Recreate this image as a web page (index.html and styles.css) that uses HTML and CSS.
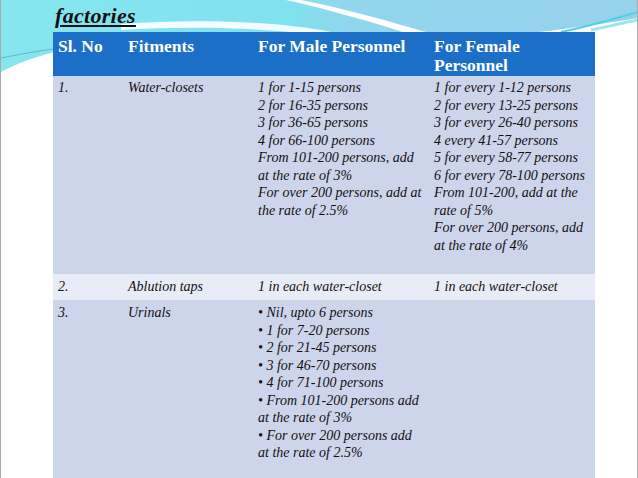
FILE: index.html
```html
<!DOCTYPE html>
<html>
<head>
<meta charset="utf-8">
<link rel="stylesheet" href="styles.css">
</head>
<body>
<div class="slide">
  <svg class="bg" width="638" height="478" viewBox="0 0 638 478" xmlns="http://www.w3.org/2000/svg">
    <defs>
      <linearGradient id="sky" x1="0" y1="0" x2="1" y2="0">
        <stop offset="0" stop-color="#86e6f0"/>
        <stop offset="0.45" stop-color="#80e2ee"/>
        <stop offset="0.55" stop-color="#92d6ec"/>
        <stop offset="1" stop-color="#96d2ec"/>
      </linearGradient>
    </defs>
    <rect x="0" y="0" width="638" height="478" fill="#ffffff"/>
    <path d="M0 0 H638 V18 C600 24 560 30 520 34 L120 40 C70 46 30 56 0 72 Z" fill="url(#sky)"/>
    <path d="M120 24 C200 18 280 22 330 32 L300 33 C250 28 190 26 120 30 Z" fill="#ffffff" opacity="0.9"/>
    <path d="M285 0 L300 0 C350 10 390 22 425 32 L405 33 C370 22 330 10 285 0 Z" fill="#ffffff"/>
    <path d="M0 58 C30 52 55 48 80 46" stroke="#5cb8c4" stroke-width="1" fill="none"/>
    <path d="M560 32 C590 26 615 18 638 12" stroke="#4fd0e4" stroke-width="2" fill="none"/>
    <path d="M590 30 C610 26 625 22 638 20" stroke="#9ae6f2" stroke-width="3" fill="none"/>
  </svg>
  <h1 class="title">factories</h1>
  <table class="grid">
    <colgroup>
      <col class="c1"><col class="c2"><col class="c3"><col class="c4">
    </colgroup>
    <thead>
      <tr class="head">
        <th>Sl. No</th>
        <th>Fitments</th>
        <th>For Male Personnel</th>
        <th>For Female Personnel</th>
      </tr>
    </thead>
    <tbody>
      <tr class="r1">
        <td>1.</td>
        <td>Water-closets</td>
        <td>1 for 1-15 persons<br>2 for 16-35 persons<br>3 for 36-65 persons<br>4 for 66-100 persons<br>From 101-200 persons, add at the rate of 3%<br>For over 200 persons, add at the rate of 2.5%</td>
        <td>1 for every 1-12 persons<br>2 for every 13-25 persons<br>3 for every 26-40 persons<br>4 every 41-57 persons<br>5 for every 58-77 persons<br>6 for every 78-100 persons<br>From 101-200, add at the rate of 5%<br>For over 200 persons, add at the rate of 4%</td>
      </tr>
      <tr class="r2">
        <td>2.</td>
        <td>Ablution taps</td>
        <td>1 in each water-closet</td>
        <td>1 in each water-closet</td>
      </tr>
      <tr class="r3">
        <td>3.</td>
        <td>Urinals</td>
        <td>• Nil, upto 6 persons<br>• 1 for 7-20 persons<br>• 2 for 21-45 persons<br>• 3 for 46-70 persons<br>• 4 for 71-100 persons<br>• From 101-200 persons add at the rate of 3%<br>• For over 200 persons add at the rate of 2.5%</td>
        <td></td>
      </tr>
    </tbody>
  </table>
</div>
</body>
</html>
```
FILE: styles.css
```css
html, body {
  margin: 0;
  padding: 0;
}
body {
  width: 638px;
  height: 478px;
  overflow: hidden;
  background: #ffffff;
}
.slide {
  position: relative;
  width: 638px;
  height: 478px;
  box-sizing: border-box;
  border-left: 1px solid #a9a9a9;
  border-right: 1px solid #a9a9a9;
  padding: 4px 0 0 52px;
  overflow: hidden;
}
.bg {
  position: absolute;
  left: 0;
  top: 0;
  z-index: 0;
}
.title {
  position: relative;
  z-index: 1;
  margin: 0 0 0 2px;
  height: 28px;
  font-family: "Liberation Serif", "Times New Roman", "DejaVu Serif", serif;
  font-style: italic;
  font-weight: bold;
  font-size: 22px;
  line-height: 24px;
  letter-spacing: 0.3px;
  color: #111111;
  text-decoration: underline;
  text-decoration-thickness: 1.5px;
  text-underline-offset: 2px;
}
.grid {
  position: relative;
  z-index: 1;
  border-collapse: collapse;
  table-layout: fixed;
  width: 542px;
}
.c1 { width: 70px; }
.c2 { width: 130px; }
.c3 { width: 176px; }
.c4 { width: 166px; }
.grid th, .grid td {
  padding: 0 7px 0 5px;
  vertical-align: top;
  text-align: left;
}
.head th {
  background: #1c6fc6;
  color: #ffffff;
  font-family: "Liberation Serif", "Times New Roman", "DejaVu Serif", serif;
  font-weight: bold;
  font-size: 17.5px;
  line-height: 19px;
  height: 44px;
  box-sizing: border-box;
  padding-top: 5px;
}
.grid td {
  font-family: "Liberation Serif", "Times New Roman", "DejaVu Serif", serif;
  font-style: italic;
  font-size: 14px;
  line-height: 17.5px;
  color: #111111;
  padding-top: 3px;
  box-sizing: border-box;
}
.r1 td {
  background: #cdd5ea;
  height: 198px;
}
.r2 td {
  background: #e8ecf6;
  height: 26px;
  padding-top: 4px;
}
.r3 td {
  background: #cdd5ea;
  height: 180px;
  padding-top: 4px;
}
```
